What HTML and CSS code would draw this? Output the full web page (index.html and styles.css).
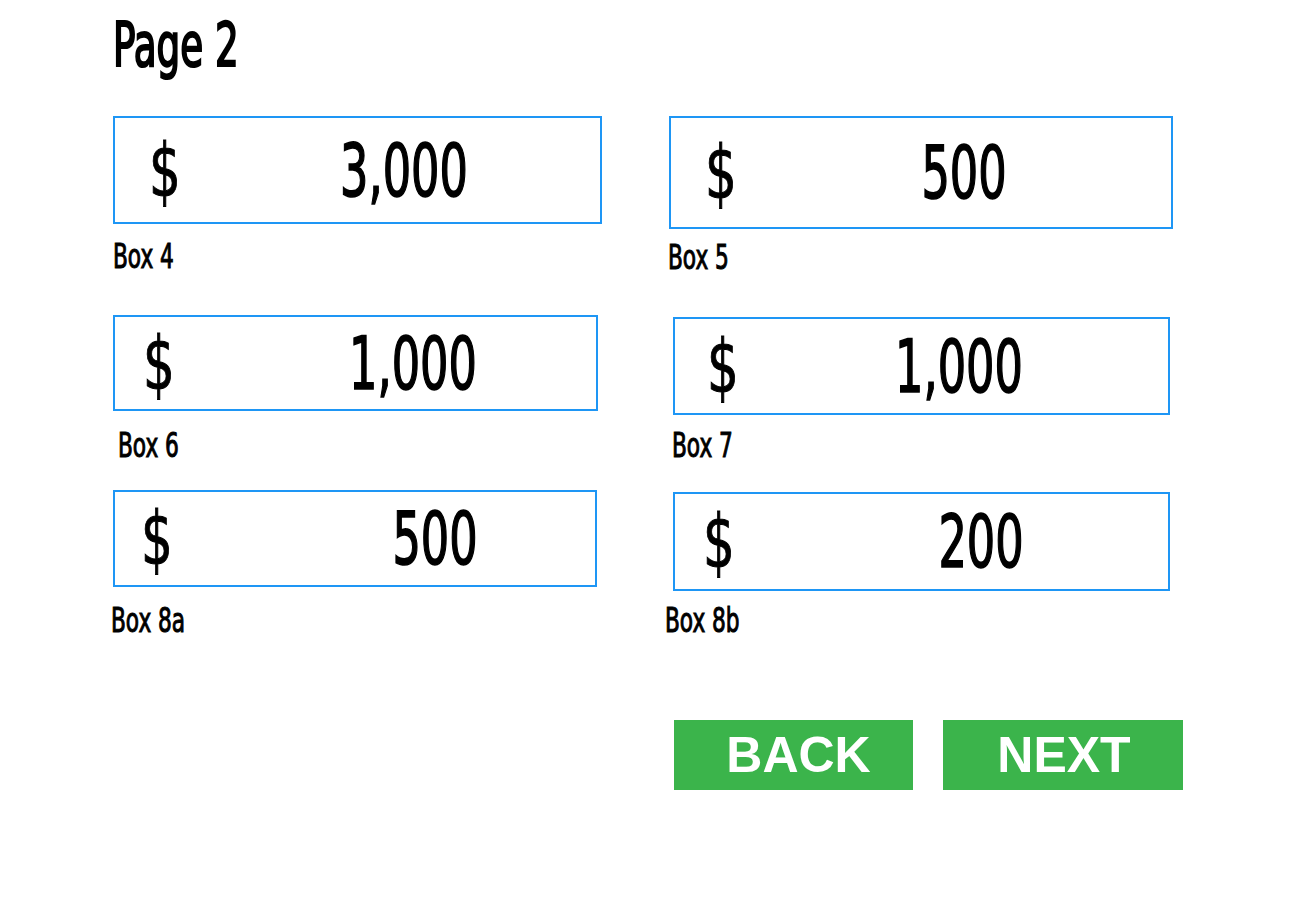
FILE: index.html
```html
<!DOCTYPE html>
<html lang="en">
<head>
<meta charset="utf-8">
<title>Page 2</title>
<link rel="stylesheet" href="styles.css">
</head>
<body>
<div class="page">
  <h1 class="title"><span class="cond">Page 2</span></h1>

  <div class="row row-1">
    <div class="cell cell-4">
      <div class="field"><span class="dollar">$</span><span class="amount">3,000</span></div>
      <div class="label"><span class="cond-l">Box 4</span></div>
    </div>
    <div class="cell cell-5">
      <div class="field"><span class="dollar">$</span><span class="amount">500</span></div>
      <div class="label"><span class="cond-l">Box 5</span></div>
    </div>
  </div>

  <div class="row row-2">
    <div class="cell cell-6">
      <div class="field"><span class="dollar">$</span><span class="amount">1,000</span></div>
      <div class="label"><span class="cond-l">Box 6</span></div>
    </div>
    <div class="cell cell-7">
      <div class="field"><span class="dollar">$</span><span class="amount">1,000</span></div>
      <div class="label"><span class="cond-l">Box 7</span></div>
    </div>
  </div>

  <div class="row row-3">
    <div class="cell cell-8a">
      <div class="field"><span class="dollar">$</span><span class="amount">500</span></div>
      <div class="label"><span class="cond-l">Box 8a</span></div>
    </div>
    <div class="cell cell-8b">
      <div class="field"><span class="dollar">$</span><span class="amount">200</span></div>
      <div class="label"><span class="cond-l">Box 8b</span></div>
    </div>
  </div>

  <div class="actions">
    <button class="btn btn-back" type="button">BACK</button>
    <button class="btn btn-next" type="button">NEXT</button>
  </div>
</div>
</body>
</html>
```
FILE: styles.css
```css
* { box-sizing: border-box; }

html, body {
  margin: 0;
  padding: 0;
  background: #ffffff;
}

body {
  font-family: "DejaVu Sans Condensed", "DejaVu Sans", sans-serif;
  color: #000000;
  width: 1296px;
  height: 899px;
  overflow: hidden;
}

.page {
  padding-top: 14px;
}

.title {
  margin: 0 0 41px 113px;
  font-size: 61px;
  line-height: 61px;
  font-weight: normal;
  height: 61px;
}

.cond {
  display: inline-block;
  transform: scaleX(0.68);
  transform-origin: left center;
  white-space: nowrap;
  -webkit-text-stroke: 2.2px #000;
}

.row {
  display: flex;
  align-items: flex-start;
}

.row-1 { height: 199px; }
.row-2 { height: 175px; }
.row-3 { height: 230px; }

.cell {
  display: flex;
  flex-direction: column;
  flex: none;
}

.field {
  border: 2px solid #1e96f5;
  display: flex;
  align-items: center;
  font-size: 73px;
  line-height: 1;
}

.dollar {
  display: inline-block;
  flex: none;
  width: 40px;
  transform: scaleX(0.76);
  transform-origin: left center;
  -webkit-text-stroke: 1px #000;
}

.amount {
  display: inline-block;
  flex: none;
  width: 200px;
  text-align: center;
  transform: scaleX(0.68);
  transform-origin: center center;
  white-space: nowrap;
  -webkit-text-stroke: 1.6px #000;
}

.label {
  font-size: 33px;
  line-height: 33px;
  height: 33px;
  font-weight: normal;
}

.cond-l {
  display: inline-block;
  transform: scaleX(0.73);
  transform-origin: left center;
  white-space: nowrap;
  -webkit-text-stroke: 1px #000;
}

/* Row 1 */
.cell-4 { margin-left: 113px; width: 489px; }
.cell-4 .field { height: 108px; }
.cell-4 .dollar { margin-left: 34px; }
.cell-4 .amount { margin-left: 115px; }
.cell-4 .label { margin-top: 16px; }

.cell-5 { margin-left: 67px; width: 504px; }
.cell-5 .field { height: 113px; }
.cell-5 .dollar { margin-left: 34px; }
.cell-5 .amount { margin-left: 119px; }
.cell-5 .label { margin-top: 12px; margin-left: -1px; }

/* Row 2 */
.cell-6 { margin-left: 113px; width: 485px; }
.cell-6 .field { height: 96px; }
.cell-6 .dollar { margin-left: 28px; }
.cell-6 .amount { margin-left: 130px; }
.cell-6 .label { margin-top: 18px; margin-left: 5px; }

.cell-7 { margin-left: 75px; margin-top: 2px; width: 497px; }
.cell-7 .field { height: 98px; }
.cell-7 .dollar { margin-left: 32px; }
.cell-7 .amount { margin-left: 112px; }
.cell-7 .label { margin-top: 14px; margin-left: -1px; }

/* Row 3 */
.cell-8a { margin-left: 113px; width: 484px; }
.cell-8a .field { height: 97px; }
.cell-8a .dollar { margin-left: 26px; }
.cell-8a .amount { margin-left: 154px; }
.cell-8a .label { margin-top: 17px; margin-left: -2px; }

.cell-8b { margin-left: 76px; margin-top: 2px; width: 497px; }
.cell-8b .field { height: 99px; }
.cell-8b .dollar { margin-left: 28px; }
.cell-8b .amount { margin-left: 138px; }
.cell-8b .label { margin-top: 13px; margin-left: -8px; }

/* Buttons */
.actions {
  display: flex;
  gap: 30px;
  margin-left: 674px;
}

.btn {
  display: flex;
  align-items: center;
  justify-content: center;
  height: 70px;
  border: 0;
  padding: 0;
  margin: 0;
  background: #3bb44b;
  color: #ffffff;
  font-family: "Liberation Sans", Arial, sans-serif;
  font-weight: bold;
  font-size: 50px;
  line-height: 1;
}

.btn-back { width: 239px; padding-left: 10px; }
.btn-next { width: 240px; padding-left: 2px; }
```
